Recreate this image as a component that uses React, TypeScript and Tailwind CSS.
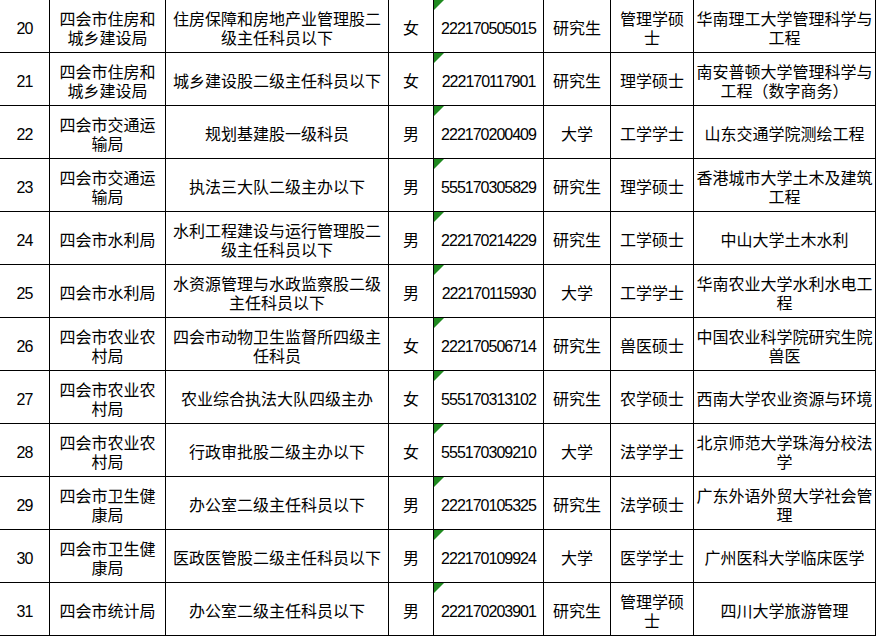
import React from "react";

type Row = [string, string, string, string, string, string, string, string];

const rows: Row[] = [
  ["20", "四会市住房和城乡建设局", "住房保障和房地产业管理股二级主任科员以下", "女", "222170505015", "研究生", "管理学硕士", "华南理工大学管理科学与工程"],
  ["21", "四会市住房和城乡建设局", "城乡建设股二级主任科员以下", "女", "222170117901", "研究生", "理学硕士", "南安普顿大学管理科学与工程（数字商务）"],
  ["22", "四会市交通运输局", "规划基建股一级科员", "男", "222170200409", "大学", "工学学士", "山东交通学院测绘工程"],
  ["23", "四会市交通运输局", "执法三大队二级主办以下", "男", "555170305829", "研究生", "理学硕士", "香港城市大学土木及建筑工程"],
  ["24", "四会市水利局", "水利工程建设与运行管理股二级主任科员以下", "男", "222170214229", "研究生", "工学硕士", "中山大学土木水利"],
  ["25", "四会市水利局", "水资源管理与水政监察股二级主任科员以下", "男", "222170115930", "大学", "工学学士", "华南农业大学水利水电工程"],
  ["26", "四会市农业农村局", "四会市动物卫生监督所四级主任科员", "女", "222170506714", "研究生", "兽医硕士", "中国农业科学院研究生院兽医"],
  ["27", "四会市农业农村局", "农业综合执法大队四级主办", "女", "555170313102", "研究生", "农学硕士", "西南大学农业资源与环境"],
  ["28", "四会市农业农村局", "行政审批股二级主办以下", "女", "555170309210", "大学", "法学学士", "北京师范大学珠海分校法学"],
  ["29", "四会市卫生健康局", "办公室二级主任科员以下", "男", "222170105325", "研究生", "法学硕士", "广东外语外贸大学社会管理"],
  ["30", "四会市卫生健康局", "医政医管股二级主任科员以下", "男", "222170109924", "大学", "医学学士", "广州医科大学临床医学"],
  ["31", "四会市统计局", "办公室二级主任科员以下", "男", "222170203901", "研究生", "管理学硕士", "四川大学旅游管理"],
];

const cjk = "font-['Noto_Sans_CJK_SC',sans-serif] text-[16px] leading-[19px] pt-[3px]";
const num = "font-['Liberation_Sans',Arial,sans-serif] text-[16px] leading-[19px] tracking-[-1px] pt-[5px]";

function Cell({ children, className = "", mono = false, flag = false }: { children: React.ReactNode; className?: string; mono?: boolean; flag?: boolean }) {
  return (
    <div
      className={`relative flex h-[53px] items-center justify-center border-b border-r border-black text-center text-black ${mono ? num : cjk} ${className}`}
    >
      {flag && (
        <span className="absolute left-0 top-0 h-0 w-0 border-l-[5px] border-t-[5px] border-l-[#1f8a1f] border-t-[#1f8a1f] border-r-[5px] border-b-[5px] border-r-transparent border-b-transparent" />
      )}
      <span>{children}</span>
    </div>
  );
}

export default function App() {
  return (
    <div className="h-[637px] w-[878px] overflow-hidden bg-white">
      <div className="flex flex-col">
        {rows.map((r) => (
          <div key={r[0]} className="grid grid-cols-[50px_116px_223px_45px_110px_67px_83px_182px]">
            <Cell mono>{r[0]}</Cell>
            <Cell className="px-[5px]">{r[1]}</Cell>
            <Cell className="px-[4px]">{r[2]}</Cell>
            <Cell>{r[3]}</Cell>
            <Cell mono flag>{r[4]}</Cell>
            <Cell>{r[5]}</Cell>
            <Cell className="px-[4px]">{r[6]}</Cell>
            <Cell className="px-[2px]">{r[7]}</Cell>
          </div>
        ))}
      </div>
    </div>
  );
}
